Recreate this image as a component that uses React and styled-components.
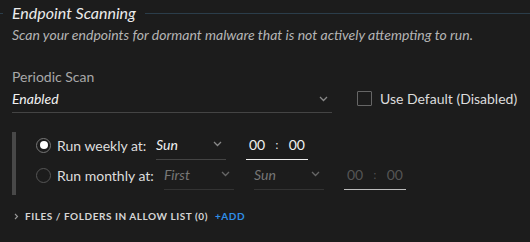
import React from 'react'
import styled, { createGlobalStyle } from 'styled-components'

const GlobalStyle = createGlobalStyle`
    html, body {
        margin: 0;
        padding: 0;
        background: #1c1c1c;
    }
    body {
        font-family: Lato, "Open Sans", sans-serif;
        color: #e6e6e6;
    }
`

const Page = styled.div`
    width: 530px;
    height: 242px;
    box-sizing: border-box;
    padding: 3px 0 0 0;
    background: #1c1c1c;
    overflow: hidden;
`

const Legend = styled.div`
    display: flex;
    align-items: center;
    gap: 9px;
    &::before {
        content: '';
        width: 3px;
        height: 1px;
        background: #2b3d4a;
    }
    &::after {
        content: '';
        flex: 1;
        height: 1px;
        background: #2b3d4a;
    }
`

const Title = styled.div`
    font-size: 16px;
    font-style: italic;
    color: #ececec;
    line-height: 20px;
`

const Body = styled.div`
    padding: 0 12px;
`

const Description = styled.div`
    margin-top: 3px;
    font-size: 14px;
    font-style: italic;
    color: #b5b5b5;
    line-height: 17px;
`

const FieldRow = styled.div`
    margin-top: 25px;
    display: flex;
    align-items: flex-end;
`

const Field = styled.div`
    width: 320px;
`

const Label = styled.div`
    font-size: 14px;
    color: #a8a8a8;
    line-height: 17px;
`

const Select = styled.div`
    display: flex;
    align-items: center;
    justify-content: space-between;
    width: ${p => p.width || 320}px;
    height: ${p => p.height || 28}px;
    box-sizing: border-box;
    padding: 0 4px ${p => p.lift || 0}px 0;
    border-bottom: 1px solid ${p => p.disabled ? '#333' : '#444'};
    font-size: 14px;
    font-style: italic;
    color: ${p => p.disabled ? '#777' : '#f2f2f2'};
`

const Chevron = ({ color }) => (
    <svg width="9" height="6" viewBox="0 0 9 6">
        <path d="M1 1l3.5 3.5L8 1" fill="none" stroke={color} strokeWidth="1.3" />
    </svg>
)

const CheckWrap = styled.label`
    display: flex;
    align-items: center;
    gap: 8px;
    margin-left: 25px;
    margin-bottom: 6px;
    font-size: 14px;
    line-height: 17px;
    color: #dcdcdc;
`

const Box = styled.span`
    width: 15px;
    height: 15px;
    box-sizing: border-box;
    border: 1px solid #666;
    border-radius: 1px;
`

const Schedule = styled.div`
    margin-top: 19px;
    border-left: 4px solid #484848;
    padding: 0 0 5px 20px;
    display: flex;
    flex-direction: column;
    gap: 2px;
`

const Row = styled.div`
    display: flex;
    align-items: center;
    height: 28px;
`

const Radio = styled.span`
    width: 15px;
    height: 15px;
    box-sizing: border-box;
    border-radius: 50%;
    margin-bottom: 2px;
    border: 1px solid ${p => p.checked ? '#777' : '#555'};
    display: flex;
    align-items: center;
    justify-content: center;
    &::after {
        content: '';
        display: ${p => p.checked ? 'block' : 'none'};
        width: 8px;
        height: 8px;
        border-radius: 50%;
        background: #fff;
    }
`

const RadioText = styled.span`
    margin-left: 6px;
    margin-bottom: 2px;
    font-size: 14px;
    color: #dedede;
    width: ${p => p.width}px;
`

const Gap = styled.span`
    width: ${p => p.w}px;
`

const Time = styled.div`
    display: flex;
    align-items: center;
    justify-content: space-between;
    width: 62px;
    height: 28px;
    box-sizing: border-box;
    padding: 0 3px 2px;
    border-bottom: 1px solid ${p => p.disabled ? '#bbb' : '#eee'};
    font-size: 14px;
    color: ${p => p.disabled ? '#555' : '#f0f0f0'};
`

const Colon = styled.span`
    font-size: 11px;
`

const Footer = styled.div`
    margin-top: 15px;
    margin-left: 2px;
    display: flex;
    align-items: center;
    gap: 6px;
    font-size: 10px;
    line-height: 12px;
    font-weight: 700;
    letter-spacing: 0.55px;
    color: #d6d6d6;
`

const AddLink = styled.span`
    color: #2f8ee6;
    margin-left: 1px;
`

export default function App() {
    return (
        <Page>
            <GlobalStyle />
            <Legend>
                <Title>Endpoint Scanning</Title>
            </Legend>
            <Body>
                <Description>Scan your endpoints for dormant malware that is not actively attempting to run.</Description>
                <FieldRow>
                    <Field>
                        <Label>Periodic Scan</Label>
                        <Select>
                            <span>Enabled</span>
                            <Chevron color="#888" />
                        </Select>
                    </Field>
                    <CheckWrap>
                        <Box />
                        Use Default (Disabled)
                    </CheckWrap>
                </FieldRow>
                <Schedule>
                    <Row>
                        <Radio checked />
                        <RadioText width={99}>Run weekly at:</RadioText>
                        <Select width={70} lift={3}>
                            <span>Sun</span>
                            <Chevron color="#888" />
                        </Select>
                        <Gap w={20} />
                        <Time>
                            <span>00</span>
                            <Colon>:</Colon>
                            <span>00</span>
                        </Time>
                    </Row>
                    <Row>
                        <Radio />
                        <RadioText width={107}>Run monthly at:</RadioText>
                        <Select width={70} lift={3} disabled>
                            <span>First</span>
                            <Chevron color="#666" />
                        </Select>
                        <Gap w={20} />
                        <Select width={70} lift={3} disabled>
                            <span>Sun</span>
                            <Chevron color="#666" />
                        </Select>
                        <Gap w={20} />
                        <Time disabled>
                            <span>00</span>
                            <Colon>:</Colon>
                            <span>00</span>
                        </Time>
                    </Row>
                </Schedule>
                <Footer>
                    <svg width="5" height="7" viewBox="0 0 5 7">
                        <path d="M1 1l2.5 2.5L1 6" fill="none" stroke="#999" strokeWidth="1.1" />
                    </svg>
                    <span>FILES / FOLDERS IN ALLOW LIST (0)</span>
                    <AddLink>+ADD</AddLink>
                </Footer>
            </Body>
        </Page>
    )
}
